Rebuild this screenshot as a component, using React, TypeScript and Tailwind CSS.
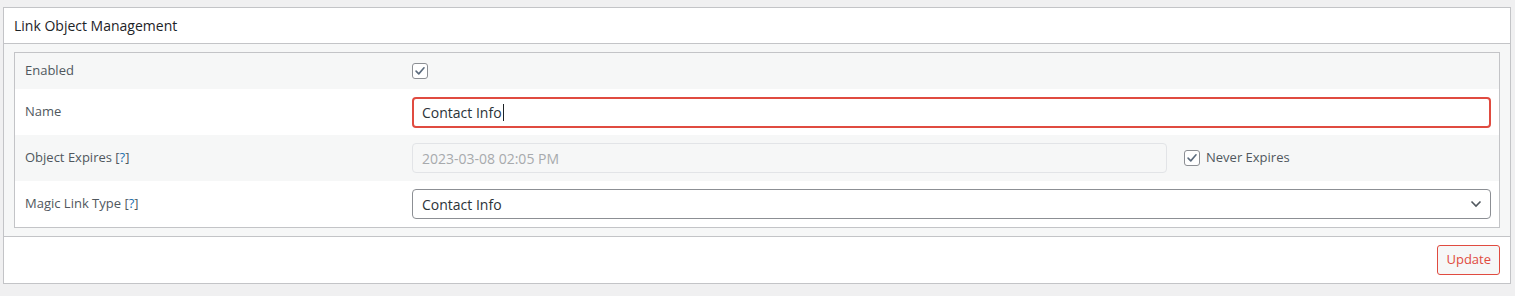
import * as React from "react";

const font = { fontFamily: '"Open Sans", "Noto Sans", sans-serif' };

function CheckBox() {
    return (
        <span className="flex h-4 w-4 items-center justify-center rounded-[3px] border border-[#8c8f94] bg-white">
            <svg viewBox="0 0 16 16" className="h-[14px] w-[14px]">
                <path d="M3.5 8.2 L6.6 11.3 L12.6 4.4" fill="none" stroke="#5b6b7d" strokeWidth="1.8" strokeLinecap="round" strokeLinejoin="round" />
            </svg>
        </span>
    );
}

function Help() {
    return (
        <span>
            [<span className="text-[#2271b1]">?</span>]
        </span>
    );
}

function Row({ label, gray, tall = true, children }: { label: React.ReactNode; gray?: boolean; tall?: boolean; children: React.ReactNode }) {
    return (
        <div className={`flex items-center ${tall ? "h-[46px]" : "h-[36px]"} ${gray ? "bg-[#f6f7f7]" : "bg-white"}`}>
            <div className="w-[397px] pl-[10px] text-[13px] text-[#50575e]">{label}</div>
            <div className="flex flex-1 items-center pr-[8px]">{children}</div>
        </div>
    );
}

export default function App() {
    return (
        <div className="min-h-[296px] bg-[#f0f0f1] pt-[7px] pl-[3px] pr-[4px]" style={font}>
            <div className="border border-[#c3c4c7] bg-white">
                <div className="flex h-[36px] items-center border-b border-[#c3c4c7] px-[10px] text-[14px] text-[#1d2327]">Link Object Management</div>
                <div className="bg-[#f6f7f7] px-[10px] pt-[8px] pb-[8px]">
                    <div className="border border-[#c3c4c7]">
                        <Row label="Enabled" gray tall={false}>
                            <CheckBox />
                        </Row>
                        <Row label="Name">
                            <div className="flex h-[31px] flex-1 items-center rounded-[4px] border-2 border-[#e04b40] bg-white pl-[8px] text-[14px] text-[#2c3338]">
                                Contact Info<span className="ml-[1px] h-[17px] w-px bg-[#1d2327]" />
                            </div>
                        </Row>
                        <Row label={<>Object Expires <Help /></>} gray>
                            <div className="flex h-[30px] w-[755px] items-center rounded-[4px] border border-[#e2e4e7] bg-[#f6f7f7] pl-[9px] text-[14px] text-[#a7aaad]">
                                2023-03-08 02:05 PM
                            </div>
                            <div className="ml-[17px] flex items-center gap-[6px] text-[13px] text-[#50575e]">
                                <CheckBox />
                                Never Expires
                            </div>
                        </Row>
                        <Row label={<>Magic Link Type <Help /></>}>
                            <div className="flex h-[30px] flex-1 items-center justify-between rounded-[4px] border border-[#8c8f94] bg-white pl-[9px] pr-[8px] text-[14px] text-[#2c3338]">
                                Contact Info
                                <svg viewBox="0 0 12 8" className="h-[8px] w-[12px]">
                                    <path d="M1.5 1.5 L6 6 L10.5 1.5" fill="none" stroke="#50575e" strokeWidth="1.6" />
                                </svg>
                            </div>
                        </Row>
                    </div>
                </div>
                <div className="flex h-[47px] items-center justify-end border-t border-[#c3c4c7] pr-[10px]">
                    <button className="h-[30px] rounded-[3px] border border-[#e04b40] bg-[#f6f7f7] px-[8px] text-[13px] text-[#e04b40]">Update</button>
                </div>
            </div>
        </div>
    );
}
